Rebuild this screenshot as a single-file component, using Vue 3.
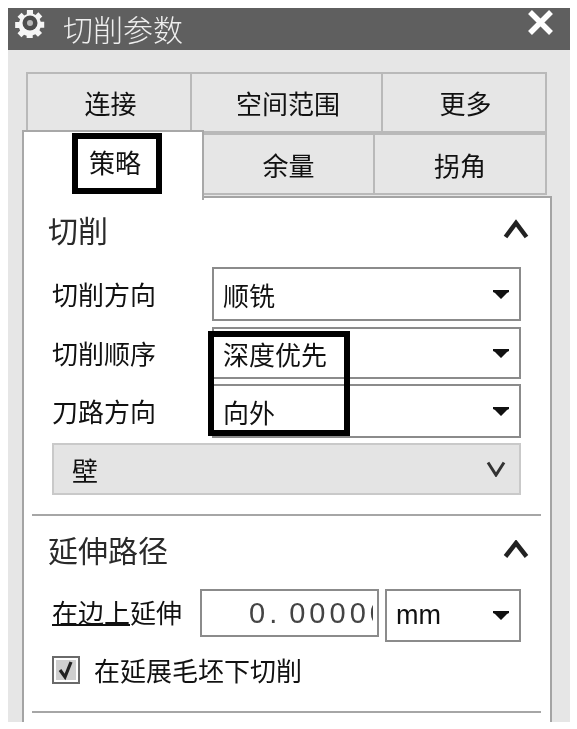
<script setup>
const rowOne = [
  { label: '连接', width: 166 },
  { label: '空间范围', width: 191 },
  { label: '更多', width: 164 }
]
const fields = [
  { label: '切削方向', value: '顺铣', h: 54 },
  { label: '切削顺序', value: '深度优先', h: 52 },
  { label: '刀路方向', value: '向外', h: 54 }
]
</script>

<template>
  <div class="page">
    <div class="window">
      <header class="title">
        <svg class="gear" viewBox="0 0 30 30" width="30" height="30">
          <path fill="#f6f6f6" d="M11.5 0h7v4.5l3 1.3 3.2-3 4.5 4.7-3 3 1.2 3h4v7h-4.300l-1.200 3 3 3-4.700 4.500-3-3-3 1.200V34h-7v-4.300l-3-1.200-3 3L.7 26.800l3-3-1.200-3H-2v-7h4.500l1.200-3-3-3 4.700-4.500 3 3 3-1.300z" transform="translate(1.900 1.900) scale(.87)"/>
          <circle cx="15" cy="15" r="7.500" fill="#4c4c4c"/>
          <circle cx="15" cy="15" r="3" fill="#b8b8b8"/>
        </svg>
        <span class="title-text">切削参数</span>
        <svg class="close" viewBox="0 0 25 25" width="25" height="25">
          <path d="M2 2l21 21M23 2L2 23" stroke="#fff" stroke-width="5.500" fill="none"/>
        </svg>
      </header>

      <div class="tabs-one">
        <div v-for="t in rowOne" :key="t.label" class="tab" :style="{ width: t.width + 'px' }">{{ t.label }}</div>
      </div>
      <div class="tabs-two">
        <div class="tab active">
          策略
          <span class="mark mark-tab"></span>
        </div>
        <div class="tab plain">余量</div>
        <div class="tab plain last">拐角</div>
      </div>

      <section class="panel">
        <div class="head head-one">
          <span>切削</span>
          <svg viewBox="0 0 26 20" width="26" height="20"><path d="M2.500 18L13 4l10.500 14" stroke="#222" stroke-width="4.500" fill="none"/></svg>
        </div>

        <div class="form">
          <div v-for="f in fields" :key="f.label" class="row">
            <span class="label">{{ f.label }}</span>
            <div class="field" :style="{ height: f.h + 'px' }">
              <span>{{ f.value }}</span>
              <svg class="caret" viewBox="0 0 16 9" width="16" height="9"><path d="M0 0h16v2l-2 1-6 6-6-6-2-1z" fill="#111"/></svg>
            </div>
          </div>
          <span class="mark mark-fields"></span>
        </div>

        <div class="bar">
          <span>壁</span>
          <svg viewBox="0 0 20 16" width="20" height="16"><path d="M2 1.500l8 12.500 8-12.500" stroke="#333" stroke-width="3" fill="none"/></svg>
        </div>

        <div class="sep sep-one"></div>

        <div class="head head-two">
          <span>延伸路径</span>
          <svg viewBox="0 0 26 18" width="26" height="18"><path d="M2.500 16.500L13 3l10.500 13.500" stroke="#222" stroke-width="4.500" fill="none"/></svg>
        </div>

        <div class="ext">
          <span class="ext-label"><u>在边上</u>延伸</span>
          <div class="input"><span class="input-text">0. 00000</span></div>
          <div class="unit">
            <span>mm</span>
            <svg class="caret" viewBox="0 0 16 9" width="16" height="9"><path d="M0 0h16v2l-2 1-6 6-6-6-2-1z" fill="#111"/></svg>
          </div>
        </div>

        <div class="check-row">
          <span class="check">
            <svg viewBox="0 0 24 24" width="24" height="24">
              <rect x="2" y="2" width="20" height="20" fill="#cfcfcf"/>
              <path d="M6 12l5 7 6-15" stroke="#222" stroke-width="3.200" fill="none"/>
            </svg>
          </span>
          <span class="check-label">在延展毛坯下切削</span>
        </div>

        <div class="sep sep-two"></div>
      </section>
    </div>
  </div>
</template>

<style>
html, body { margin: 0; background: #fff; }
</style>

<style scoped>
.page {
  width: 577px;
  height: 729px;
  padding: 8px 7px 7px 8px;
  box-sizing: border-box;
  background: #fff;
  font-family: "Noto Sans CJK SC", "Liberation Sans", sans-serif;
  color: #111;
  overflow: hidden;
  filter: blur(0.5px);
}
.window {
  height: 714px;
  display: flex;
  flex-direction: column;
  background: #e6e6e6;
}
.title {
  height: 42px;
  flex: none;
  display: flex;
  align-items: flex-start;
  background: #5f5f5f;
  padding: 0 17px 0 7px;
  box-sizing: border-box;
}
.gear { margin-top: 0; flex: none; }
.title-text {
  margin-left: 18px;
  font-size: 30px;
  line-height: 40px;
  color: #efefef;
  font-weight: 300;
  flex: 1;
}
.close { margin-top: 2px; flex: none; }

.tabs-one {
  display: flex;
  margin: 22px 0 0 18px;
  height: 61px;
  flex: none;
}
.tab {
  box-sizing: border-box;
  border: 2px solid #b9b9b9;
  display: flex;
  align-items: center;
  justify-content: center;
  font-size: 26px;
  position: relative;
}
.tabs-one .tab { padding-left: 3px; }
.tabs-one .tab + .tab { border-left: 0; }
.tabs-two {
  display: flex;
  align-items: flex-start;
  margin: -3px 0 0 14px;
  height: 66px;
  flex: none;
}
.active {
  width: 182px;
  height: 70px;
  background: #fff;
  border-bottom: 0;
  border-color: #a8a8a8;
  position: relative;
  z-index: 2;
  padding: 0 0 10px 4px;
}
.plain {
  width: 171px;
  height: 62px;
  margin-top: 3px;
  border-left: 0;
}
.plain.last { width: 172px; }

.mark {
  position: absolute;
  box-sizing: border-box;
  border: 6px solid #000;
  pointer-events: none;
}
.mark-tab {
  left: 48px;
  top: 1px;
  width: 90px;
  height: 61px;
}
.mark-fields {
  left: 156px;
  top: 64px;
  width: 142px;
  height: 105px;
  z-index: 3;
}

.panel {
  flex: 1;
  width: 530px;
  margin-left: 14px;
  box-sizing: border-box;
  background: #fff;
  border: 2px solid #a4a4a4;
  border-bottom: 0;
  position: relative;
}
.head {
  display: flex;
  align-items: center;
  justify-content: space-between;
  padding: 0 21px 0 24px;
  font-size: 30px;
  color: #2a2a2a;
  box-sizing: border-box;
}
.head-one { height: 69px; padding-bottom: 7px; }
.head-two { height: 73px; padding-bottom: 7px; }

.form {
  position: relative;
  margin-left: 28px;
  width: 469px;
  display: flex;
  flex-direction: column;
  gap: 5px;
}
.row {
  display: grid;
  grid-template-columns: 160px 309px;
  align-items: center;
  font-size: 26px;
}
.row:nth-child(2) { margin-top: 1px; }
.label { padding-bottom: 2px; }
.field {
  box-sizing: border-box;
  border: 2px solid #8b8b8b;
  background: #fff;
  display: flex;
  align-items: center;
  justify-content: space-between;
  padding: 0 10px 0 9px;
}
.caret { flex: none; }

.bar {
  box-sizing: border-box;
  margin: 5px 0 0 28px;
  width: 469px;
  height: 52px;
  background: #e4e4e4;
  border: 2px solid #c9c9c9;
  display: flex;
  align-items: center;
  justify-content: space-between;
  padding: 0 13px 0 18px;
  font-size: 26px;
}
.sep {
  height: 2px;
  margin: 0 9px 0 8px;
  background: #a6a6a6;
}
.sep-one { margin-top: 19px; }
.sep-two { margin-top: 27px; }

.ext {
  display: flex;
  align-items: flex-start;
  margin-left: 28px;
  height: 53px;
}
.ext-label {
  width: 148px;
  flex: none;
  height: 48px;
  line-height: 46px;
  font-size: 26px;
  white-space: nowrap;
}
.ext-label u { text-underline-offset: 1px; text-decoration-thickness: 2px; }
.input {
  box-sizing: border-box;
  width: 179px;
  height: 48px;
  border: 2px solid #8b8b8b;
  flex: none;
  padding-left: 47px;
  font-family: "Liberation Sans", sans-serif;
  font-size: 29px;
  line-height: 44px;
  letter-spacing: 4px;
  word-spacing: -4px;
  color: #444;
}
.input-text {
  display: block;
  width: 124px;
  overflow: hidden;
  white-space: nowrap;
}
.unit {
  box-sizing: border-box;
  margin-left: 6px;
  width: 136px;
  height: 53px;
  border: 2px solid #8b8b8b;
  flex: none;
  display: flex;
  align-items: center;
  justify-content: space-between;
  padding: 0 10px 0 9px;
  font-family: "Liberation Sans", sans-serif;
  font-size: 27px;
}
.check-row {
  display: flex;
  align-items: center;
  margin: 14px 0 0 28px;
  height: 28px;
}
.check {
  box-sizing: border-box;
  width: 28px;
  height: 28px;
  border: 2px solid #6a6a6a;
  flex: none;
  display: flex;
}
.check-label {
  margin-left: 14px;
  font-size: 26px;
  line-height: 28px;
}
</style>
